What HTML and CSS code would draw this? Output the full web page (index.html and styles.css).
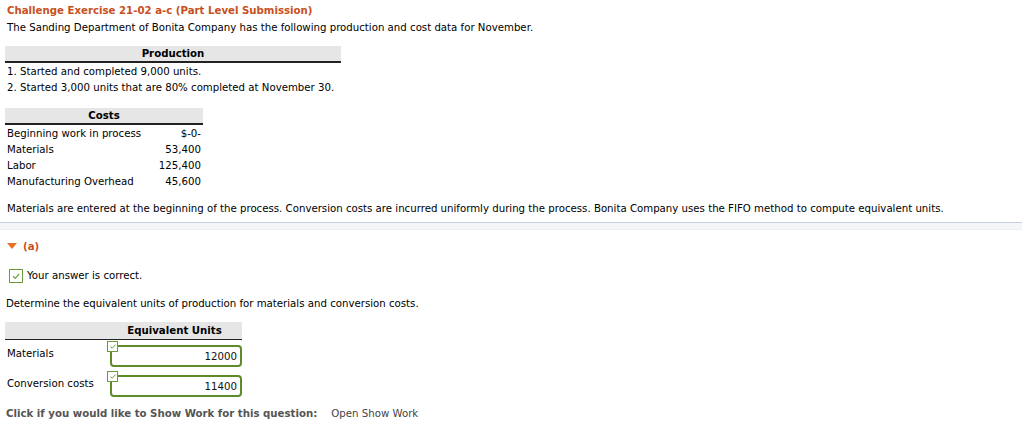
FILE: index.html
```html
<!DOCTYPE html>
<html>
<head>
<meta charset="utf-8">
<link rel="stylesheet" href="styles.css">
</head>
<body>
<div class="intro">
  <h1 class="title">Challenge Exercise 21-02 a-c (Part Level Submission)</h1>
  <p class="line lead">The Sanding Department of Bonita Company has the following production and cost data for November.</p>
  <table class="prod">
    <thead><tr><th>Production</th></tr></thead>
    <tbody>
      <tr><td>1. Started and completed 9,000 units.</td></tr>
      <tr><td>2. Started 3,000 units that are 80% completed at November 30.</td></tr>
    </tbody>
  </table>
  <table class="costs">
    <thead><tr><th colspan="2">Costs</th></tr></thead>
    <tbody>
      <tr><td>Beginning work in process</td><td class="num">$-0-</td></tr>
      <tr><td>Materials</td><td class="num">53,400</td></tr>
      <tr><td>Labor</td><td class="num">125,400</td></tr>
      <tr><td>Manufacturing Overhead</td><td class="num">45,600</td></tr>
    </tbody>
  </table>
  <p class="line note">Materials are entered at the beginning of the process. Conversion costs are incurred uniformly during the process. Bonita Company uses the FIFO method to compute equivalent units.</p>
</div>
<div class="sep"></div>
<div class="part">
  <div class="part-head"><span class="tri"></span><span class="part-label">(a)</span></div>
  <div class="correct"><span class="cbox"><svg width="10" height="10" viewBox="0 0 10 10"><path d="M2 5.2 L4.2 7.4 L8.2 2.8" fill="none" stroke="#6b9a3a" stroke-width="1.2"/></svg></span><span>Your answer is correct.</span></div>
  <p class="line q">Determine the equivalent units of production for materials and conversion costs.</p>
  <table class="eq">
    <thead><tr><th></th><th>Equivalent Units</th></tr></thead>
    <tbody>
      <tr><td class="lbl">Materials</td><td class="cell"><span class="mini"><svg width="8" height="7" viewBox="0 0 8 7"><path d="M1.5 3.6 L3.2 5.2 L6.5 1.6" fill="none" stroke="#6b9a3a" stroke-width="1"/></svg></span><div class="inp">12000</div></td></tr>
      <tr><td class="lbl">Conversion costs</td><td class="cell"><span class="mini"><svg width="8" height="7" viewBox="0 0 8 7"><path d="M1.5 3.6 L3.2 5.2 L6.5 1.6" fill="none" stroke="#6b9a3a" stroke-width="1"/></svg></span><div class="inp">11400</div></td></tr>
    </tbody>
  </table>
  <div class="work"><span class="work-q">Click if you would like to Show Work for this question:</span><span class="work-link">Open Show Work</span></div>
</div>
</body>
</html>
```

FILE: styles.css
```css
html, body {
  margin: 0;
  padding: 0;
  background: #fff;
}
body {
  font-family: "DejaVu Sans", Verdana, sans-serif;
  font-size: 10.2px;
  color: #000;
  width: 1024px;
  height: 424px;
  overflow: hidden;
}
.intro {
  padding: 4px 0 0 7px;
}
.title {
  margin: 0;
  font-size: 10.2px;
  font-weight: bold;
  color: #c8501e;
  line-height: 14px;
}
.line {
  margin: 0;
  line-height: 14px;
}
.lead {
  margin-top: 3px;
}
table {
  border-collapse: collapse;
  font-size: 10.2px;
}
th, td {
  padding: 0;
}
.prod {
  margin: 11px 0 0 -2px;
  width: 336px;
}
.prod th {
  background: #e6e6e6;
  border-bottom: 2px solid #222;
  height: 15px;
  font-weight: bold;
  text-align: center;
}
.prod td {
  height: 16px;
  padding-left: 2px;
}
.costs {
  margin: 13px 0 0 -2px;
  width: 198px;
}
.costs th {
  background: #e6e6e6;
  border-bottom: 2px solid #222;
  height: 15px;
  font-weight: bold;
  text-align: center;
}
.costs td {
  height: 16px;
  padding-left: 2px;
}
.costs td.num {
  text-align: right;
  padding-right: 2px;
}
.note {
  margin-top: 13px;
}
.sep {
  margin-top: 6px;
  height: 6px;
  border-top: 1px solid #c9cfe0;
  background: #f5f6fa;
  border-bottom: 1px solid #eceff4;
  margin-right: 2px;
}
.part {
  padding: 0 0 0 6px;
}
.part-head {
  display: flex;
  align-items: center;
  height: 16px;
  margin-top: 8px;
}
.tri {
  width: 0;
  height: 0;
  border-left: 5px solid transparent;
  border-right: 5px solid transparent;
  border-top: 6px solid #e8712a;
  margin-left: 1px;
  margin-right: 6px;
}
.part-label {
  font-weight: bold;
  color: #c8501e;
}
.correct {
  display: flex;
  align-items: center;
  margin-top: 14px;
  margin-left: 3px;
  height: 15px;
}
.cbox {
  width: 12px;
  height: 12px;
  border: 1px solid #6b9a3a;
  display: flex;
  align-items: center;
  justify-content: center;
  margin-right: 4px;
  background: #fff;
}
.q {
  margin-top: 14px;
}
.eq {
  margin: 11px 0 0 -1px;
  width: 237px;
}
.eq th {
  background: #e6e6e6;
  border-bottom: 1px solid #222;
  height: 17px;
  font-weight: bold;
  text-align: center;
}
.eq th:first-child {
  width: 102px;
}
.eq td.lbl {
  vertical-align: top;
  padding: 6px 0 0 2px;
  line-height: 16px;
}
.eq td.cell {
  position: relative;
  padding: 5px 0 3px 0;
}
.mini {
  position: absolute;
  left: 0;
  top: 1px;
  width: 9px;
  height: 9px;
  border: 1px solid #6b9a3a;
  background: #fff;
  display: flex;
  align-items: center;
  justify-content: center;
}
.inp {
  margin-left: 3px;
  height: 18px;
  border: 2px solid #5f8a2a;
  border-radius: 4px;
  text-align: right;
  line-height: 19px;
  padding-right: 3px;
  color: #111;
}
.work {
  margin-top: 7px;
  line-height: 14px;
  display: flex;
  gap: 14px;
  color: #555;
}
.work-q {
  font-weight: bold;
}
.work-link {
  color: #444;
}
```
